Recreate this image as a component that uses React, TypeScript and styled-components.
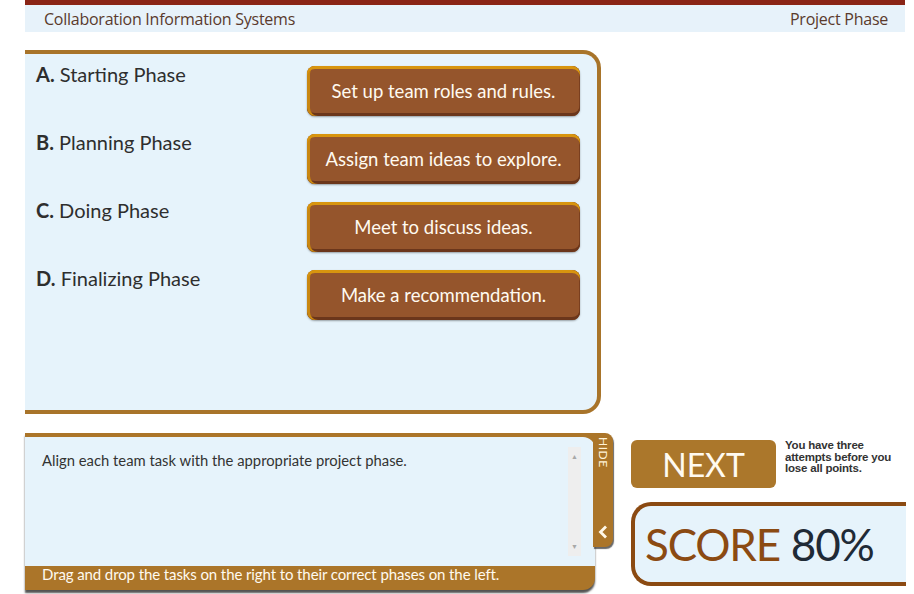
import styled, { createGlobalStyle } from "styled-components";

const GlobalStyle = createGlobalStyle`
  html, body {
    margin: 0;
    padding: 0;
    background: #fff;
  }
  body {
    font-family: Lato, "Open Sans", sans-serif;
  }
`

const Page = styled.div`
  width: 914px;
  height: 594px;
  overflow: hidden;
  padding-left: 25px;
  box-sizing: border-box;
`

const Header = styled.header`
  width: 880px;
  border-top: 5px solid #8a2516;
  background: #e7f2fa;
  height: 32px;
  display: flex;
  align-items: center;
  justify-content: space-between;
  padding: 0 17px 0 19px;
  box-sizing: border-box;
  font-family: "Open Sans", sans-serif;
  font-size: 16px;
  color: #5a3a2c;
  letter-spacing: -0.25px;
`

const TopPanel = styled.section`
  margin-top: 18px;
  width: 576px;
  height: 364px;
  box-sizing: border-box;
  border: 4px solid #a8742a;
  border-left: none;
  border-radius: 0 18px 18px 0;
  background: #e6f3fb;
  padding: 12px 17px 0 11px;
  display: grid;
  grid-template-columns: 1fr 273px;
  grid-auto-rows: 50px;
  row-gap: 18px;
`

const PhaseLabel = styled.div`
  font-size: 20px;
  color: #2e2e2e;
  margin-top: -4px;

  & b {
    font-weight: 700;
  }
`

const TaskButton = styled.button`
  font-family: Lato, sans-serif;
  font-size: 18.5px;
  color: #fffaf0;
  background: #95552c;
  border: none;
  border-radius: 8px;
  box-shadow: inset 0 3px 0 #d8950f, inset 3px 0 0 #c98711, inset 0 -3px 0 #6b361b,
    inset -1px 0 0 #7a3f1f, 0 1px 2px rgba(0, 0, 0, 0.35);
  cursor: pointer;
  padding: 0;
`

const BottomRow = styled.div`
  margin-top: 19px;
  display: flex;
  align-items: flex-start;
`

const Drawer = styled.div`
  display: flex;
  align-items: flex-start;
`

const DrawerMain = styled.div`
  width: 570px;
  background: #ab7529;
  padding-top: 4px;
  border-radius: 0 0 12px 0;
  box-shadow: 0 3px 2px rgba(40, 40, 40, 0.8);
`

const DrawerContent = styled.div`
  height: 129px;
  background: #e6f3fb;
  border-radius: 0 12px 0 0;
  display: flex;
  justify-content: space-between;
  padding: 14px 14px 10px 17px;
  box-sizing: border-box;
  font-size: 14.8px;
  color: #333;
`

const Scroller = styled.div`
  width: 13px;
  background: #eeeeee;
  display: flex;
  flex-direction: column;
  justify-content: space-between;
  align-items: center;
  padding: 6px 0;
  margin-top: -4px;
  font-size: 7px;
  color: #a8a8a8;
  line-height: 1;
`

const DrawerFooter = styled.div`
  height: 24px;
  padding: 0 17px;
  font-size: 15px;
  line-height: 17px;
  color: #fffaf0;
  letter-spacing: -0.1px;
`

const Tab = styled.div`
  width: 20px;
  height: 114px;
  background: #ab7529;
  border-radius: 0 8px 8px 0;
  margin-left: -2px;
  box-shadow: 1px 2px 1px rgba(40, 40, 40, 0.7);
  display: flex;
  flex-direction: column;
  justify-content: space-between;
  align-items: center;
  padding: 4px 0 7px;
  box-sizing: border-box;
  color: #fff3d8;
`

const TabLabel = styled.span`
  writing-mode: vertical-rl;
  font-size: 12px;
  letter-spacing: 0.5px;
`

const SideColumn = styled.div`
  margin-left: 18px;
  margin-top: 7px;
  display: flex;
  flex-direction: column;
  gap: 14px;
`

const NextRow = styled.div`
  display: flex;
  gap: 9px;
`

const NextButton = styled.button`
  width: 145px;
  height: 48px;
  background: #ab772b;
  border: none;
  border-radius: 6px;
  color: #fffaf0;
  font-family: Lato, sans-serif;
  font-size: 32px;
  padding: 0;
  cursor: pointer;
`

const Warning = styled.p`
  margin: 0;
  width: 120px;
  font-family: "Liberation Sans", Arial, sans-serif;
  font-size: 11.5px;
  font-weight: 700;
  line-height: 11.5px;
  color: #333;
  letter-spacing: -0.2px;
`

const ScoreBox = styled.div`
  width: 275px;
  height: 84px;
  box-sizing: border-box;
  border: 4px solid #8b4a12;
  border-right: none;
  border-radius: 20px 0 0 20px;
  background: #e6f3fb;
  display: flex;
  align-items: center;
  padding-left: 10px;
  gap: 11px;
  font-family: Lato, sans-serif;
  font-size: 44px;
  letter-spacing: -1.2px;
`

const ScoreLabel = styled.span`
  color: #8b4a12;
`

const ScoreValue = styled.span`
  color: #1f2a36;
`

const phases = [
  { key: "A.", name: "Starting Phase", task: "Set up team roles and rules." },
  { key: "B.", name: "Planning Phase", task: "Assign team ideas to explore." },
  { key: "C.", name: "Doing Phase", task: "Meet to discuss ideas." },
  { key: "D.", name: "Finalizing Phase", task: "Make a recommendation." },
]

export default function App() {
  return (
    <>
      <GlobalStyle/>
      <Page>
        <Header>
          <span>Collaboration Information Systems</span>
          <span>Project Phase</span>
        </Header>
        <TopPanel>
          {phases.map(p => (
            <>
              <PhaseLabel key={p.key}><b>{p.key}</b> {p.name}</PhaseLabel>
              <TaskButton key={p.task}>{p.task}</TaskButton>
            </>
          ))}
        </TopPanel>
        <BottomRow>
          <Drawer>
            <DrawerMain>
              <DrawerContent>
                <span>Align each team task with the appropriate project phase.</span>
                <Scroller>
                  <span>▲</span>
                  <span>▼</span>
                </Scroller>
              </DrawerContent>
              <DrawerFooter>Drag and drop the tasks on the right to their correct phases on the left.</DrawerFooter>
            </DrawerMain>
            <Tab>
              <TabLabel>HIDE</TabLabel>
              <svg width="12" height="16" viewBox="0 0 12 16">
                <path d="M9 2.5 L3.5 8 L9 13.5" fill="none" stroke="#fff8e8" strokeWidth="2.8"/>
              </svg>
            </Tab>
          </Drawer>
          <SideColumn>
            <NextRow>
              <NextButton>NEXT</NextButton>
              <Warning>You have three attempts before you lose all points.</Warning>
            </NextRow>
            <ScoreBox>
              <ScoreLabel>SCORE</ScoreLabel>
              <ScoreValue>80%</ScoreValue>
            </ScoreBox>
          </SideColumn>
        </BottomRow>
      </Page>
    </>
  )
}
